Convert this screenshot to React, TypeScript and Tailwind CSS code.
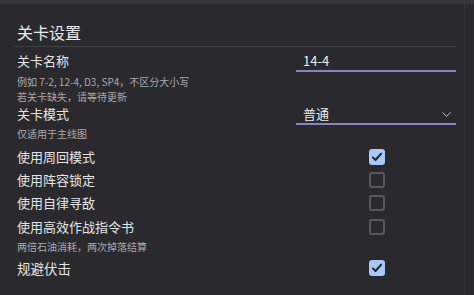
import { ChevronDown } from "lucide-react";

const font = { fontFamily: '"Noto Sans CJK SC", "Noto Sans", sans-serif' };

const Check = ({ on }: { on: boolean }) =>
  on ? (
    <div className="flex h-4 w-4 items-center justify-center rounded-[3px] bg-[#a9c7f7]">
      <svg viewBox="0 0 16 16" className="h-3 w-3">
        <path d="M2.5 8.5 L6 12 L13.5 3.5" fill="none" stroke="#1c2633" strokeWidth="2.6" strokeLinecap="round" strokeLinejoin="round" />
      </svg>
    </div>
  ) : (
    <div className="h-4 w-4 rounded-[3px] border-2 border-[#58585d]" />
  );

const CheckRow = ({ label, hint, on, big }: { label: string; hint?: string; on: boolean; big?: boolean }) => (
  <div className="flex items-start justify-between">
    <div>
      <div className={`${big ? "text-[13.5px]" : "text-[13px]"} leading-[18px] text-[#e4e4e6]`}>{label}</div>
      {hint && <div className="mt-[3px] text-[10px] leading-[15px] text-[#a9a9ad]">{hint}</div>}
    </div>
    <div className="flex h-[18px] w-[160px] items-center justify-center pl-[2px]">
      <Check on={on} />
    </div>
  </div>
);

export default function App() {
  return (
    <div className="h-[295px] w-[474px] overflow-hidden bg-[#2a2a2e]" style={font}>
      <div className="h-[4px] bg-[#36363b]" />
      <div className="mr-[9px] h-[291px] border-r border-[#333338] pl-[17px] pr-[8px]">
        <div className="pt-[17px] text-[16px] leading-[22px] text-[#ececee]">关卡设置</div>
        <div className="-ml-[2px] mt-[3px] h-px bg-[#3e3e43]" />

        <div className="mt-[5px] flex items-start justify-between">
          <div>
            <div className="text-[13px] leading-[18px] text-[#e4e4e6]">关卡名称</div>
            <div className="mt-[4px] text-[10px] leading-[15px] text-[#a9a9ad]">例如 7-2, 12-4, D3, SP4，不区分大小写</div>
            <div className="text-[10px] leading-[15px] text-[#a9a9ad]">若关卡缺失，请等待更新</div>
          </div>
          <div className="flex h-[20px] w-[160px] items-center border-b-2 border-[#8983c0] pl-[7px] text-[13px] text-[#ececee]">
            14-4
          </div>
        </div>

        <div className="mt-[1px] flex items-start justify-between">
          <div>
            <div className="text-[13px] leading-[18px] text-[#e4e4e6]">关卡模式</div>
            <div className="mt-[3px] text-[10px] leading-[15px] text-[#a9a9ad]">仅适用于主线图</div>
          </div>
          <div className="flex h-[20px] w-[160px] items-center justify-between border-b-2 border-[#8983c0] pl-[7px] pr-[2px] text-[13px] text-[#ececee]">
            <span>普通</span>
            <ChevronDown size={15} strokeWidth={1.5} className="text-[#c8c8cc]" />
          </div>
        </div>

        <div className="mt-[7px] flex flex-col gap-[5px]">
          <CheckRow label="使用周回模式" on />
          <CheckRow label="使用阵容锁定" on={false} />
          <CheckRow label="使用自律寻敌" on={false} />
          <div className="mt-[1px]">
            <CheckRow label="使用高效作战指令书" hint="两倍石油消耗，两次掉落结算" on={false} />
          </div>
          <CheckRow label="规避伏击" on big />
        </div>
      </div>
    </div>
  );
}
